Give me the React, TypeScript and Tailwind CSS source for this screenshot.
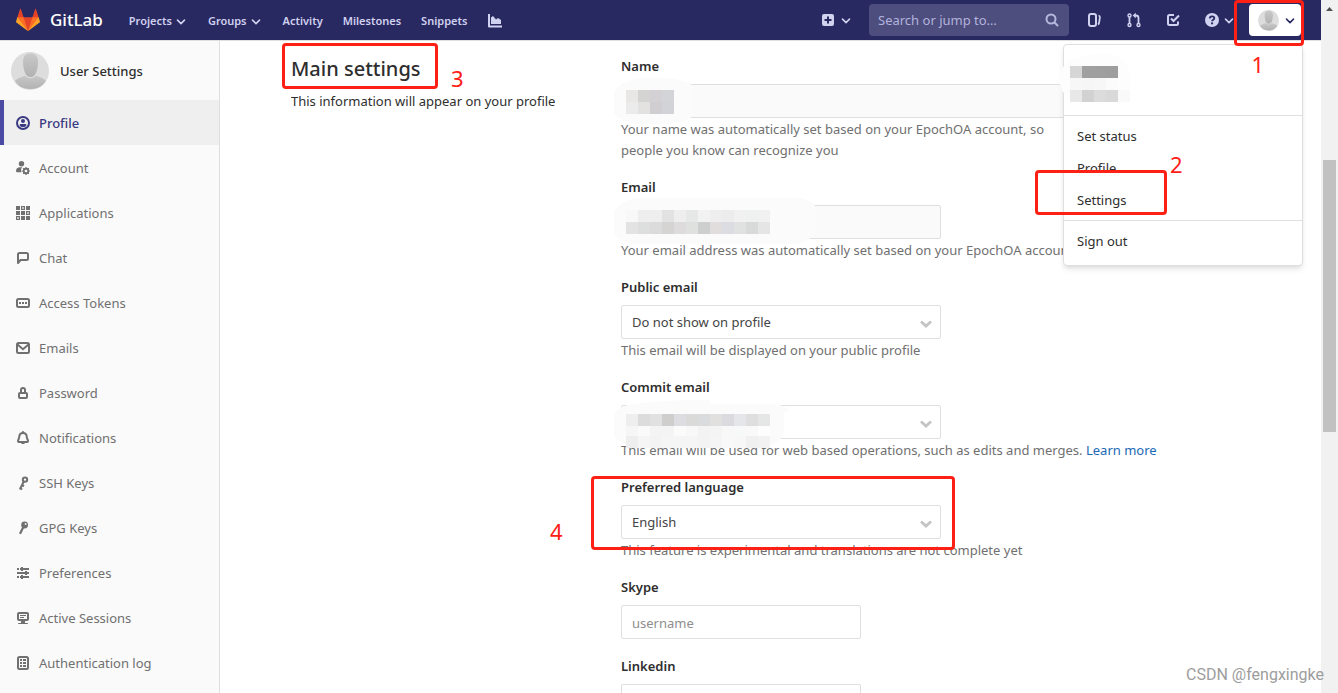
import { ReactNode } from 'react';
import { clsx } from 'clsx';

type IconName =
  | 'profile' | 'account' | 'applications' | 'comment' | 'token' | 'mail' | 'lock'
  | 'bell' | 'key' | 'key2' | 'preferences' | 'monitor' | 'log'
  | 'chart' | 'plus' | 'search' | 'issues' | 'merge' | 'todo' | 'question' | 'chevron';

const icons: Record<IconName, ReactNode> = {
  profile: (
    <>
      <circle cx="8" cy="8" r="6" fill="none" stroke="currentColor" strokeWidth="2" />
      <circle cx="8" cy="6" r="2" />
      <path d="M4.5 10.2c0-.8.8-1.2 1.6-1.2h3.8c.8 0 1.6.4 1.6 1.2-.7 1.3-2 1.8-3.5 1.8s-2.800-.5-3.500-1.800z" />
    </>
  ),
  account: (
    <>
      <circle cx="6.500" cy="3.700" r="2.700" />
      <path d="M1 11c0-2.500 1.500-3.800 4-3.800h2.200C6.300 8.200 6 9.500 6.200 10.800c.1.600.2 1 .4 1.400H2c-.6 0-1-.5-1-1.200z" />
      <circle cx="11" cy="11" r="2.300" fill="none" stroke="currentColor" strokeWidth="1.800" />
      <path d="M11 7v8M7 11h8M8.200 8.200l5.600 5.600M13.800 8.200l-5.600 5.600" stroke="currentColor" strokeWidth="1.200" />
      <circle cx="11" cy="11" r="1.300" className="fill-[#fafafa]" />
    </>
  ),
  applications: (
    <>
      <path d="M1 1h4v4H1zM11 1h4v4h-4zM1 6h4v4H1zM6 6h4v4H6zM6 11h4v4H6zM11 11h4v4h-4z" />
      <path d="M6.600 1.600h2.800v2.800H6.600zM11.600 6.600h2.800v2.800h-2.800zM1.600 11.600h2.800v2.800H1.600z" fill="none" stroke="currentColor" strokeWidth="1.200" />
    </>
  ),
  comment: (
    <path d="M3 13V4.500C3 3.500 3.500 3 4.500 3h7c1 0 1.500.5 1.500 1.500v4c0 1-.5 1.500-1.500 1.500H5.500z" fill="none" stroke="currentColor" strokeWidth="2" strokeLinejoin="round" />
  ),
  token: (
    <>
      <rect x="2" y="4" width="12" height="8" rx="1.500" fill="none" stroke="currentColor" strokeWidth="2" />
      <path d="M4 7h2v2H4zM7 7h2v2H7zM10 7h2v2h-2z" />
    </>
  ),
  mail: (
    <>
      <rect x="2" y="3" width="12" height="10" rx="1.500" fill="none" stroke="currentColor" strokeWidth="2" />
      <path d="M2.500 4.500L8 9.200l5.500-4.700" fill="none" stroke="currentColor" strokeWidth="2" />
    </>
  ),
  lock: (
    <>
      <rect x="4" y="8" width="8" height="5" rx="1" fill="none" stroke="currentColor" strokeWidth="2" />
      <path d="M6 7.500V5a2 2 0 0 1 4 0v2.500" fill="none" stroke="currentColor" strokeWidth="2" />
    </>
  ),
  bell: (
    <>
      <path d="M8 3C5.300 3 4.300 5 4.200 7c-.1 2-1.200 2.600-1.200 4.200 0 .5.300.8.8.8h8.400c.5 0 .8-.3.8-.8 0-1.600-1.100-2.200-1.200-4.200C11.700 5 10.700 3 8 3z" fill="none" stroke="currentColor" strokeWidth="2" strokeLinejoin="round" />
      <path d="M7 1.300h2V3H7zM6 12.800h4c0 .8-.9 1.200-2 1.200s-2-.4-2-1.200z" />
    </>
  ),
  key: (
    <>
      <circle cx="10" cy="4.600" r="2.200" fill="none" stroke="currentColor" strokeWidth="2" />
      <path d="M8.800 6.500L5.200 13.800M6.500 10l2.600 1.200M4.400 13l2.800 1.300" fill="none" stroke="currentColor" strokeWidth="2" />
    </>
  ),
  key2: (
    <>
      <circle cx="9.600" cy="5" r="3.400" />
      <path d="M8.600 6.500L5 13.800" fill="none" stroke="currentColor" strokeWidth="2.200" />
      <circle cx="10.600" cy="4" r=".9" className="fill-[#fafafa]" />
    </>
  ),
  preferences: (
    <path d="M2 3h2v2H2zM6 2h2v1h6v2H8v1H6V5H5V3h1zM2 7h8V6h2v1h2v2h-2v1h-2V9H2zM2 11h2v2H2zM6 10h2v1h6v2H8v1H6v-1H5v-2h1z" />
  ),
  monitor: (
    <>
      <rect x="3" y="3" width="10" height="7" rx="1" fill="none" stroke="currentColor" strokeWidth="2" />
      <path d="M5 5h6v1H5zM5 7h4v1H5zM6 11h4v2h2c.6 0 1 .4 1 1H3c0-.6.4-1 1-1h2z" />
    </>
  ),
  log: (
    <>
      <rect x="3" y="2" width="10" height="12" rx="1.500" fill="none" stroke="currentColor" strokeWidth="2" />
      <path d="M5 4h2v2H5zM8 4h3v2H8zM5 7h2v2H5zM8 7h3v2H8zM5 10h2v2H5zM8 10h3v2H8z" />
    </>
  ),
  chart: (
    <>
      <path d="M2 1v12.500h13" fill="none" stroke="currentColor" strokeWidth="2" strokeLinejoin="round" />
      <path d="M4 11V4.500l2-1.500 3 3.500 2-1.500L14 7v4z" />
    </>
  ),
  plus: (
    <path fillRule="evenodd" d="M4 2h8a2 2 0 0 1 2 2v8a2 2 0 0 1-2 2H4a2 2 0 0 1-2-2V4a2 2 0 0 1 2-2zm3 3v2H4.500v2H7v2.500h2V9h2.500V7H9V4.500H7z" />
  ),
  search: (
    <>
      <circle cx="7" cy="7" r="4.500" fill="none" stroke="currentColor" strokeWidth="2" />
      <path d="M10.500 10.500L13.500 13.500" stroke="currentColor" strokeWidth="2" strokeLinecap="round" />
    </>
  ),
  issues: (
    <>
      <rect x="2" y="2" width="7" height="12" rx="2" fill="none" stroke="currentColor" strokeWidth="2" />
      <path d="M11.500 3.500c1 .3 1.500 1 1.400 1.900l-.8 5.200c-.1.900-.5 1.500-1.100 1.900" fill="none" stroke="currentColor" strokeWidth="1.800" />
    </>
  ),
  merge: (
    <>
      <circle cx="3.500" cy="3.500" r="1.500" fill="none" stroke="currentColor" strokeWidth="1.400" />
      <circle cx="3.500" cy="13" r="1.500" fill="none" stroke="currentColor" strokeWidth="1.400" />
      <circle cx="12.500" cy="13" r="1.500" fill="none" stroke="currentColor" strokeWidth="1.400" />
      <path d="M3.500 5v6.500M12.500 11.500V6c0-1.500-.8-2.500-2.500-2.500H8.500" fill="none" stroke="currentColor" strokeWidth="1.800" />
      <path d="M9.800 0.800v5.400L6.600 3.500z" />
    </>
  ),
  todo: (
    <>
      <path d="M9 3H4.500C3.500 3 3 3.500 3 4.500v7c0 1 .5 1.500 1.500 1.500h7c1 0 1.500-.5 1.500-1.500V9.500" fill="none" stroke="currentColor" strokeWidth="2" />
      <path d="M6 6.500l2.500 2.500L14 3.500" fill="none" stroke="currentColor" strokeWidth="2" />
    </>
  ),
  question: (
    <>
      <circle cx="8" cy="8" r="7" />
      <path d="M5.800 6.400c0-1.300 1-2.100 2.300-2.100s2.200.8 2.200 1.900c0 1.500-2.200 1.500-2.200 3.100" fill="none" stroke="#292961" strokeWidth="1.800" />
      <path d="M7.100 10.400h2v1.900h-2z" fill="#292961" />
    </>
  ),
  chevron: (
    <path d="M4 7l4 4 4-4" fill="none" stroke="currentColor" strokeWidth="1.800" strokeLinecap="round" strokeLinejoin="round" />
  ),
};

function Icon({ name, className = 'size-4' }: { name: IconName; className?: string }) {
  return (
    <svg viewBox="0 0 16 16" fill="currentColor" aria-hidden="true" className={clsx('shrink-0', className)}>
      {icons[name]}
    </svg>
  );
}

function Logo() {
  return (
    <svg viewBox="0 0 36 36" className="size-6 shrink-0" aria-hidden="true">
      <path fill="#e24329" d="M2 14l9.380 9v-9l-4-12.280c-.205-.632-1.176-.632-1.380 0z" />
      <path fill="#e24329" d="M34 14l-9.380 9v-9l4-12.280c.205-.632 1.176-.632 1.380 0z" />
      <path fill="#e24329" d="M18 34.380L3 14h30z" />
      <path fill="#fc6d26" d="M18 34.380L11.380 14H2l4 11zM18 34.380L24.620 14H34l-4 11z" />
      <path fill="#fca326" d="M2 14L.1 20.160c-.18.565 0 1.200.5 1.560l17.420 12.660zM34 14l1.900 6.160c.18.565 0 1.200-.5 1.560L18 34.380z" />
    </svg>
  );
}

function Avatar({ className }: { className: string }) {
  return (
    <svg viewBox="0 0 38 38" className={clsx('shrink-0 rounded-full', className)} aria-hidden="true">
      <defs>
        <linearGradient id="bust" x1="0" y1="0" x2="0" y2="1">
          <stop offset="0" stopColor="#c8c8c8" />
          <stop offset="1" stopColor="#b2b2b2" />
        </linearGradient>
      </defs>
      <rect width="38" height="38" fill="#dddddd" />
      <path fill="url(#bust)" d="M4 29c2-3 6-3.500 10-5.500 3 2 8 2 11 0 4 2 8 2.500 10 5.500-3 5-8 8-15.500 8S7 34 4 29z" />
      <path fill="url(#bust)" stroke="#dddddd" strokeWidth="2.500" paintOrder="stroke" d="M12 10c0-6 3-8.500 7.500-8.500S27 4 27 10c0 3-.5 6-1.500 9.500-1 3.500-3 5.500-6 5.500s-5-2-6-5.500C12.500 16 12 13 12 10z" />
    </svg>
  );
}

// Pixelated patch that hides private values
function Mosaic({ width, height, blob, rows, className }: {
  width: number;
  height: number;
  blob: string;
  rows: { x: number; y: number; colors: string[] }[];
  className: string;
}) {
  return (
    <svg width={width} height={height} className={clsx('absolute pointer-events-none', className)} aria-hidden="true">
      <path d={blob} />
      {rows.map((row) =>
        row.colors.map((color, i) => (
          <rect key={`${row.y}-${i}`} x={row.x + i * 12} y={row.y} width="12" height="12" fill={color} shapeRendering="crispEdges" />
        ))
      )}
    </svg>
  );
}

const links: { label: string; icon: IconName }[] = [
  { label: 'Profile', icon: 'profile' },
  { label: 'Account', icon: 'account' },
  { label: 'Applications', icon: 'applications' },
  { label: 'Chat', icon: 'comment' },
  { label: 'Access Tokens', icon: 'token' },
  { label: 'Emails', icon: 'mail' },
  { label: 'Password', icon: 'lock' },
  { label: 'Notifications', icon: 'bell' },
  { label: 'SSH Keys', icon: 'key' },
  { label: 'GPG Keys', icon: 'key2' },
  { label: 'Preferences', icon: 'preferences' },
  { label: 'Active Sessions', icon: 'monitor' },
  { label: 'Authentication log', icon: 'log' },
];

function MenuItem({ children }: { children: ReactNode }) {
  return <a href="#" className="flex h-8 items-center px-[13px] pt-0.5">{children}</a>;
}

function Header() {
  return (
    <header className="relative z-20 flex h-[41px] shrink-0 items-center border-b border-[#dfdfdf] bg-[#292961] pl-4 pr-5 text-[11px] font-semibold text-[#d1d1f0]">
      <a href="#" className="flex items-center gap-2.5 text-[17px] font-medium text-white">
        <Logo />
        GitLab
      </a>
      <nav className="ml-[26px] flex items-center gap-5 pt-0.5">
        <button className="flex items-center gap-0.5">Projects <Icon name="chevron" className="size-3.5" /></button>
        <button className="flex items-center gap-0.5">Groups <Icon name="chevron" className="size-3.5" /></button>
        <a href="#">Activity</a>
        <a href="#">Milestones</a>
        <a href="#">Snippets</a>
        <a href="#" aria-label="Instance statistics"><Icon name="chart" /></a>
      </nav>
      <div className="ml-auto flex items-center">
        <button aria-label="New" className="mr-4 flex items-center gap-[3px]">
          <Icon name="plus" />
          <Icon name="chevron" className="size-3.5" />
        </button>
        <div className="mr-1.5 flex h-8 w-50 items-center rounded bg-[#4d4d7e] px-[9px]">
          <input
            type="text"
            aria-label="Search or jump to"
            placeholder="Search or jump to…"
            className="min-w-0 flex-1 bg-transparent pt-0.5 text-[13px] font-normal outline-none placeholder:text-[#b3b3dc]"
          />
          <Icon name="search" className="size-4 text-[#b7b7dd]" />
        </div>
        <a href="#" aria-label="Issues" className="flex w-[39px] justify-center"><Icon name="issues" /></a>
        <a href="#" aria-label="Merge requests" className="flex w-[39px] justify-center"><Icon name="merge" /></a>
        <a href="#" aria-label="To-Do List" className="flex w-[39px] justify-center"><Icon name="todo" /></a>
        <button aria-label="Help" className="mr-2 flex w-[49px] items-center gap-0.5 pl-3">
          <Icon name="question" />
          <Icon name="chevron" className="size-3.5" />
        </button>
        <button aria-label="User menu" className="flex h-8 w-[52px] items-center gap-1 rounded bg-white pl-[9px] text-[#292961]">
          <Avatar className="size-[21px]" />
          <Icon name="chevron" className="size-3.5" />
        </button>
      </div>

      <div className="absolute right-[18px] top-11 w-60 rounded-sm border border-[#dfdfdf] bg-white text-[13px] font-normal text-[#2e2e2e] shadow-md">
        <div className="relative h-[71px] border-b border-[#dfdfdf]">
          <Mosaic
            width={72}
            height={50}
            className="-left-[6px] top-[9px] fill-[#fdfdfd]"
            blob="M12 6Q24 0 50 0Q68 2 72 20V38Q70 48 50 48H28Q10 48 4 36Q-4 18 12 6Z"
            rows={[
              { x: 12, y: 12, colors: ['#d6d6d6', '#a0a0a0', '#9f9f9f', '#9e9e9e'] },
              { x: 12, y: 24, colors: ['#f7f7f7', '#f6f6f6', '#f7f7f7', '#fbfbfb'] },
              { x: 12, y: 36, colors: ['#e8e8e8', '#d2d2d2', '#dcdcdc', '#d9d9d9', '#f9f9f9'] },
            ]}
          />
        </div>
        <div className="relative border-b border-[#dfdfdf] py-1">
          <MenuItem>Set status</MenuItem>
          <MenuItem>Profile</MenuItem>
          <MenuItem>Settings</MenuItem>
          <div className="pointer-events-none absolute -left-[29px] bottom-[5px] h-[45px] w-[132px] rounded-sm border-3 border-[#ff2015]" />
          <span className="absolute left-[106px] top-8 text-[22px] leading-8 text-[#ff2015]">2</span>
        </div>
        <div className="pb-2 pt-1">
          <MenuItem>Sign out</MenuItem>
        </div>
      </div>

      <div className="pointer-events-none absolute right-[17px] top-0 h-[46px] w-[70px] rounded-sm border-3 border-[#ff2015]" />
      <span className="absolute right-[57px] top-12 text-[22px] font-normal leading-8 text-[#ff2015]">1</span>
    </header>
  );
}

function Sidebar() {
  return (
    <aside className="w-55 shrink-0 border-r border-[#dfdfdf] bg-[#fafafa] text-[13px] text-[#707070]">
      <a href="#" className="flex h-[59px] items-center gap-[11px] pl-[11px] font-medium text-[#2e2e2e]">
        <Avatar className="size-[38px]" />
        <span className="pt-0.5">User Settings</span>
      </a>
      <nav>
        {links.map((link, i) => (
          <a
            key={link.label}
            href="#"
            className={clsx(
              'flex h-[45px] items-center gap-2',
              i === 0 ? 'border-l-4 border-[#4b4ba3] bg-[#efefef] pl-[11px] font-medium text-[#393982]' : 'pl-[15px]'
            )}
          >
            <Icon name={link.icon} />
            <span className="pt-0.5">{link.label}</span>
          </a>
        ))}
      </nav>
    </aside>
  );
}

function Field({ id, label, help, children }: { id: string; label: string; help?: ReactNode; children: ReactNode }) {
  return (
    <div className="relative mb-4">
      <label htmlFor={id} className="mb-[7px] block pt-px font-semibold">{label}</label>
      {children}
      {help && <p className="-mb-px mt-px text-[#707070]">{help}</p>}
    </div>
  );
}

function Select({ id, value }: { id: string; value: string }) {
  return (
    <div className="relative w-80">
      <select id={id} className="block h-[34px] w-full appearance-none rounded-xs border border-[#dfdfdf] bg-white px-2.5 text-[#444] outline-none">
        <option>{value}</option>
      </select>
      <svg viewBox="0 0 12 8" className="pointer-events-none absolute right-[9px] top-[15px] h-2 w-3" aria-hidden="true">
        <path d="M1 1.500l5 4.500 5-4.500" fill="none" stroke="#c4c4c4" strokeWidth="2.800" />
      </svg>
    </div>
  );
}

function SettingsForm() {
  return (
    <form className="min-w-0 flex-1">
      <Field
        id="name"
        label="Name"
        help={<span className="block max-w-[450px]">Your name was automatically set based on your EpochOA account, so people you know can recognize you</span>}
      >
        <input id="name" readOnly className="block h-[34px] w-3/4 rounded-xs border border-[#dfdfdf] bg-[#fafafa] px-2.5" />
        <Mosaic
          width={80}
          height={48}
          className="-left-[7px] top-[22px] fill-[#fbfbfb]"
          blob="M0 15Q10 2 30 1H50Q66 1 78 8V40Q66 47 50 47H24Q8 46 0 36Z"
          rows={[
            { x: 12, y: 13, colors: ['#e8e7e5', '#d4d4d2', '#d3d1d4', '#d2d4d7'] },
            { x: 12, y: 25, colors: ['#ebebeb', '#e3e2e0', '#d1ced2', '#d1d3d8'] },
          ]}
        />
      </Field>
      <Field id="email" label="Email" help="Your email address was automatically set based on your EpochOA account">
        <input id="email" readOnly className="block h-[34px] w-80 rounded-xs border border-[#dfdfdf] bg-[#fafafa] px-2.5" />
        <Mosaic
          width={204}
          height={50}
          className="-left-[7px] top-[21px] fill-[#fbfbfb]"
          blob="M0 14Q10 2 24 1H186Q196 2 202 10V34Q196 46 180 47H24Q6 46 0 36Z"
          rows={[
            { x: 12, y: 13, colors: ['#f8f8f8', '#eeeeee', '#eeeeee', '#e2e2e3', '#eeeeee', '#e5e8e7', '#f2f2f2', '#eeeeee', '#ececed', '#f1f1f1', '#eff1f0', '#f1f1f1'] },
            { x: 12, y: 25, colors: ['#e3e3e4', '#dcdfde', '#dbdbdb', '#d5d4d2', '#dedbdd', '#dfe1df', '#cdcfce', '#e1dddc', '#dcdde2', '#e0e2e1', '#d8dad9', '#e5e5e5'] },
          ]}
        />
      </Field>
      <Field id="public-email" label="Public email" help="This email will be displayed on your public profile">
        <Select id="public-email" value="Do not show on profile" />
      </Field>
      <Field
        id="commit-email"
        label="Commit email"
        help={
          <>
            This email will be used for web based operations, such as edits and merges.{' '}
            <a href="#" className="text-[#1b69b6]">Learn more</a>
          </>
        }
      >
        <Select id="commit-email" value="" />
        <Mosaic
          width={176}
          height={50}
          className="-left-[7px] top-[24px] fill-[#fbfbfb]"
          blob="M0 14Q6 5 20 4Q50 0 96 0V4H160Q172 5 175 12H170V30Q168 44 152 46H24Q6 46 0 36Z"
          rows={[
            { x: 12, y: 14, colors: ['#eeeeee', '#dcdcdd', '#e1e1e1', '#cfcecc', '#dddde1', '#dadad9', '#d9dbdc', '#e1e0de', '#dbdbdf', '#e5e6e9', '#dddedd', '#e5e7e6'] },
            { x: 12, y: 26, colors: ['#f6f6f6', '#fafafa', '#f4f4f4', '#f4f4f4', '#fbfbfb', '#f8f8f8', '#f3f3f3', '#f4f4f4', '#f8f8f8', '#f7f9f8', '#f8f9f8', '#fdfdfd'] },
            { x: 12, y: 36, colors: ['#eeeeee', '#f5f5f5', '#f3f3f3', '#f5f5f5', '#f5f5f5', '#f5f5f5', '#f3f3f3', '#f5f5f5', '#f8f8f8', '#f7f7f7', '#f0f0f0', '#f2f2f2'] },
          ]}
        />
      </Field>
      <Field id="language" label="Preferred language" help="This feature is experimental and translations are not complete yet">
        <Select id="language" value="English" />
        <div className="pointer-events-none absolute -left-[30px] top-0 h-[74px] w-[364px] rounded-sm border-3 border-[#ff2015]" />
        <span className="absolute -left-[71px] top-[39px] text-[22px] leading-8 text-[#ff2015]">4</span>
      </Field>
      <Field id="skype" label="Skype">
        <input id="skype" placeholder="username" className="block h-[34px] w-60 rounded-xs border border-[#dfdfdf] px-2.5 pt-0.5 placeholder:text-[#8e8e8e]" />
      </Field>
      <Field id="linkedin" label="Linkedin">
        <input id="linkedin" className="block h-[34px] w-60 rounded-xs border border-[#dfdfdf] px-2.5 pt-0.5" />
      </Field>
    </form>
  );
}

export default function App() {
  return (
    <div className="relative flex h-screen overflow-hidden bg-white font-['Noto_Sans','Open_Sans',sans-serif] text-[#2e2e2e]">
      <div className="flex min-w-0 flex-1 flex-col">
        <Header />
        <div className="flex min-h-0 flex-1">
          <Sidebar />
          <main className="min-w-0 flex-1 overflow-hidden text-[13px] leading-[21px]">
            <div className="mx-auto flex max-w-[959px] pt-[14px]">
              <div className="relative w-[330px] shrink-0">
                <h4 className="mb-2 text-xl font-medium leading-7">Main settings</h4>
                <p>This information will appear on your profile</p>
                <div className="pointer-events-none absolute -left-[9px] -top-3 h-[46px] w-[156px] rounded-sm border-3 border-[#ff2015]" />
                <span className="absolute left-[160px] top-[7px] text-[22px] leading-8 text-[#ff2015]">3</span>
              </div>
              <SettingsForm />
            </div>
          </main>
        </div>
      </div>
      <div className="relative w-[17px] shrink-0 bg-[#f1f1f1]" aria-hidden="true">
        <svg viewBox="0 0 17 17" className="size-[17px]">
          <path d="M5 11h7L8.500 7z" fill="#505050" />
        </svg>
        <div className="absolute inset-x-0.5 top-40 h-[272px] bg-[#c1c1c1]" />
      </div>
      <span className="absolute bottom-1.5 right-[14px] z-10 font-['Roboto',sans-serif] text-base text-[#9d9d9d]">CSDN @fengxingke</span>
    </div>
  );
}
